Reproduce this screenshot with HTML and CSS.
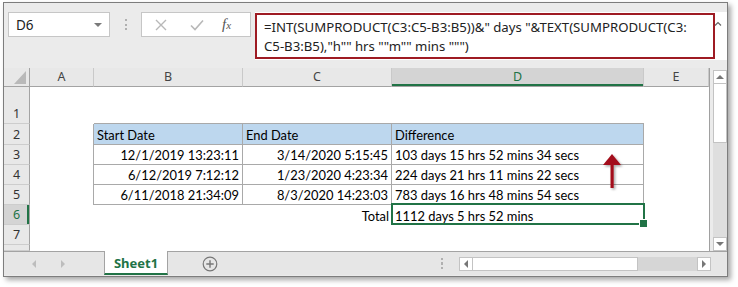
FILE: index.html
```html
<!DOCTYPE html>
<html lang="en">
<head>
<meta charset="UTF-8" />
<title>Sheet1</title>
<link rel="stylesheet" href="styles.css">
</head>
<body>
<div class="window">

  <div class="formula-bar">
    <div class="name-box"><span>D6</span><i class="caret"></i></div>
    <div class="bar-sep"><i></i></div>
    <div class="fx-box">
      <svg class="fx-icon" width="14" height="14" viewBox="0 0 14 14"><path d="M2 2 L12 12 M12 2 L2 12" stroke="#b8b8b8" stroke-width="1.4" fill="none"/></svg>
      <svg class="fx-icon" width="16" height="14" viewBox="0 0 16 14"><path d="M2 7.5 L6 11.5 L14 2.5" stroke="#b8b8b8" stroke-width="1.6" fill="none"/></svg>
      <span class="fx-label">f<small>x</small></span>
    </div>
    <div class="formula-field">
      <div class="formula-text">=INT(SUMPRODUCT(C3:C5-B3:B5))&amp;" days "&amp;TEXT(SUMPRODUCT(C3:<br>C5-B3:B5),"h"" hrs ""m"" mins """)</div>
      <svg class="field-up" width="8" height="5" viewBox="0 0 8 5"><path d="M1 4.5 L4 1.5 L7 4.5" stroke="#666" stroke-width="1.2" fill="none"/></svg>
    </div>
  </div>

  <div class="sheet-area">
    <div class="sheet">
      <table class="grid">
        <colgroup>
          <col style="width:26px"><col style="width:64px"><col style="width:149px">
          <col style="width:149px"><col style="width:252px"><col style="width:65px">
        </colgroup>
        <tr class="head-row">
          <td class="ch corner"><i></i></td><td class="ch">A</td><td class="ch">B</td><td class="ch">C</td><td class="ch cur">D</td><td class="ch">E</td>
        </tr>
        <tr class="row-tall">
          <td class="rh">1</td><td></td><td class="tt"></td><td class="tt"></td><td class="tt"></td><td></td>
        </tr>
        <tr class="row-2">
          <td class="rh">2</td><td class="tl"></td><td class="tc fill">Start Date</td><td class="tc fill">End Date</td><td class="tc fill">Difference</td><td></td>
        </tr>
        <tr class="row">
          <td class="rh">3</td><td class="tl"></td><td class="tc num">12/1/2019 13:23:11</td><td class="tc num">3/14/2020 5:15:45</td><td class="tc">103 days 15 hrs 52 mins 34 secs</td><td></td>
        </tr>
        <tr class="row">
          <td class="rh">4</td><td class="tl"></td><td class="tc num">6/12/2019 7:12:12</td><td class="tc num">1/23/2020 4:23:34</td><td class="tc">224 days 21 hrs 11 mins 22 secs</td><td></td>
        </tr>
        <tr class="row">
          <td class="rh">5</td><td class="tl"></td><td class="tc num">6/11/2018 21:34:09</td><td class="tc num">8/3/2020 14:23:03</td><td class="tc">783 days 16 hrs 48 mins 54 secs</td><td></td>
        </tr>
        <tr class="row">
          <td class="rh cur">6</td><td></td><td></td><td class="num">Total</td><td class="active">1112 days 5 hrs 52 mins</td><td></td>
        </tr>
        <tr class="row">
          <td class="rh">7</td><td></td><td></td><td></td><td></td><td></td>
        </tr>
        <tr class="row-cut">
          <td class="rh"></td><td></td><td></td><td></td><td></td><td></td>
        </tr>
      </table>

      <!-- red pointer drawn over the sheet -->
      <svg class="pointer" width="30" height="42" viewBox="0 0 30 42">
        <defs>
          <filter id="shade" x="-50%" y="-50%" width="200%" height="200%">
            <feDropShadow dx="1.5" dy="1.5" stdDeviation="1.2" flood-color="#000" flood-opacity="0.35"/>
          </filter>
        </defs>
        <g filter="url(#shade)" fill="#a3101b">
          <polygon points="14,4 5,15 23,15"/>
          <rect x="12.5" y="14" width="3.2" height="24"/>
        </g>
      </svg>
    </div>

    <div class="vscroll">
      <div class="sbtn"><i class="tri up"></i></div>
      <div class="vthumb"></div>
      <div class="vtrack"></div>
      <div class="sbtn"><i class="tri down"></i></div>
    </div>
  </div>

  <div class="tab-bar">
    <div class="tab-nav"><i class="tri left pale"></i><i class="tri right pale"></i></div>
    <div class="tab">Sheet1</div>
    <svg class="add-sheet" width="16" height="16" viewBox="0 0 16 16">
      <circle cx="8" cy="8" r="6.8" stroke="#777" stroke-width="1.2" fill="none"/>
      <path d="M8 4.3 V11.7 M4.3 8 H11.7" stroke="#777" stroke-width="1.4"/>
    </svg>
    <div class="tab-space"></div>
    <div class="bar-sep small"><i></i></div>
    <div class="hscroll">
      <div class="sbtn"><i class="tri left"></i></div>
      <div class="hthumb"></div>
      <div class="htrack"></div>
      <div class="sbtn"><i class="tri right"></i></div>
    </div>
  </div>

</div>
</body>
</html>
```

FILE: styles.css
```css
* { box-sizing: border-box; }
body { margin: 0; width: 738px; height: 287px; overflow: hidden; background: #fff; font-family: "Noto Sans", Arial, sans-serif; color: #222; }

.window { margin: 2px 0 0 3px; width: 725px; height: 275px; border: 1px solid #7d7d7d; background: #ebebeb; box-shadow: 3px 3px 5px rgba(0,0,0,0.35); display: flex; flex-direction: column; }

/* formula bar */
.formula-bar { height: 65px; display: flex; align-items: flex-start; padding: 9px 0 0 4px; }
.name-box { width: 102px; height: 25px; background: #fff; border: 1px solid #c6c6c6; display: flex; align-items: center; justify-content: space-between; padding: 0 7px 0 7px; font-size: 13.5px; }
.caret { width: 0; height: 0; border-left: 4px solid transparent; border-right: 4px solid transparent; border-top: 4px solid #7a7a7a; }
.bar-sep { width: 31px; height: 25px; display: flex; justify-content: center; align-items: center; }
.bar-sep i { width: 2px; height: 11px; background: repeating-linear-gradient(#b0b0b0 0 2px, transparent 2px 4.5px); }
.bar-sep.small { width: 34px; height: 24px; }
.fx-box { width: 110px; height: 25px; background: #fff; border: 1px solid #c6c6c6; display: flex; align-items: center; padding-left: 12px; gap: 21px; }
.fx-icon { display: block; }
.fx-label { font-family: "Liberation Serif", serif; font-style: italic; font-size: 15px; color: #555; margin-left: -4px; }
.fx-label small { font-size: 11px; }
.formula-field { flex: 1; margin-left: 4px; height: 48px; background: #fff; position: relative; }
.formula-text { width: 460px; height: 46px; margin-top: 1px; border: 2px solid #9e1b23; padding: 3px 7px; font-size: 13.2px; line-height: 19px; white-space: nowrap; }
.field-up { position: absolute; right: 5px; top: 9px; }

/* sheet */
.sheet-area { height: 183px; display: flex; }
.sheet { position: relative; width: 706px; background: #fff; border-right: 1px solid #a0a0a0; }
.grid { table-layout: fixed; width: 705px; border-collapse: separate; border-spacing: 0; font-family: Lato, "Noto Sans", sans-serif; font-size: 12.9px; color: #000; }
.grid td { padding: 0 3px 1px; white-space: nowrap; overflow: hidden; vertical-align: bottom; line-height: 16px; }
.head-row { height: 19px; }
.row-tall { height: 37px; }
.row-2 { height: 21px; }
.row { height: 20px; }
.row-cut { height: 6px; }
.row-cut td { line-height: 0; padding: 0; }

.ch { background: #e8e8e8; border-right: 1px solid #c9c9c9; border-bottom: 1px solid #a3a3a3; text-align: center; vertical-align: middle !important; font-family: "Noto Sans", sans-serif; font-size: 12.5px; color: #444; padding: 0 !important; }
.ch.cur { background: #d4d4d4; color: #217346; box-shadow: inset 0 -2px #217346; }
.ch.corner { position: relative; border-right-color: #a3a3a3; }
.ch.corner i { position: absolute; right: 3px; bottom: 2px; width: 0; height: 0; border-left: 12px solid transparent; border-bottom: 13px solid #b9b9b9; }
.rh { background: #e8e8e8; border-right: 1px solid #a3a3a3; border-bottom: 1px solid #cdcdcd; text-align: center; font-family: "Noto Sans", sans-serif; font-size: 12.5px; color: #333; padding: 0 0 1px !important; }
.rh.cur { background: #d4d4d4; color: #217346; box-shadow: inset -2px 0 #217346; }

.tt { border-bottom: 1px solid #a9a9a9; }
.tl { border-right: 1px solid #a9a9a9; }
.tc { border-right: 1px solid #a9a9a9; border-bottom: 1px solid #a9a9a9; }
.fill { background: #bdd7ee; }
.num { text-align: right; }
.active { position: relative; overflow: visible !important; }
.active::after { content: ""; position: absolute; left: -1px; right: -1px; top: -2px; bottom: 0; border: 2px solid #217346; }
.active::before { content: ""; position: absolute; right: -4px; bottom: -3px; width: 7px; height: 7px; background: #217346; border: 1px solid #fff; z-index: 1; }

.pointer { position: absolute; left: 594px; top: 82px; }

/* scroll bars */
.vscroll { width: 14px; margin-left: 3px; padding-top: 2px; display: flex; flex-direction: column; }
.sbtn { width: 14px; height: 14px; background: #fff; border: 1px solid #c3c3c3; display: flex; align-items: center; justify-content: center; flex: none; }
.vthumb { height: 59px; background: #fff; border: 1px solid #c3c3c3; border-top: 0; }
.vtrack { flex: 1; background: #dedede; }
.tri { width: 0; height: 0; display: block; }
.tri.up { border-left: 4px solid transparent; border-right: 4px solid transparent; border-bottom: 4px solid #777; }
.tri.down { border-left: 4px solid transparent; border-right: 4px solid transparent; border-top: 4px solid #777; }
.tri.left { border-top: 4px solid transparent; border-bottom: 4px solid transparent; border-right: 4px solid #777; }
.tri.right { border-top: 4px solid transparent; border-bottom: 4px solid transparent; border-left: 4px solid #777; }
.tri.pale { border-left-color: transparent; border-right-color: transparent; }
.tri.left.pale { border-right-color: #bdbdbd; }
.tri.right.pale { border-left-color: #bdbdbd; }

/* sheet tabs */
.tab-bar { height: 24px; border-top: 1px solid #a3a3a3; background: #e6e6e6; display: flex; align-items: center; }
.tab-nav { width: 100px; height: 100%; display: flex; align-items: center; padding-left: 28px; gap: 25px; }
.tab { width: 64px; height: 24px; margin-top: -1px; align-self: flex-start; background: #fff; border-left: 1px solid #a3a3a3; border-right: 1px solid #a3a3a3; border-bottom: 2px solid #217346; display: flex; align-items: center; justify-content: center; font-size: 13px; font-weight: bold; color: #217346; padding-top: 1px; }
.add-sheet { margin-left: 34px; }
.tab-space { flex: 1; }
.hscroll { width: 252px; height: 14px; margin-right: 16px; display: flex; }
.hthumb { width: 165px; background: #fff; border: 1px solid #c3c3c3; border-left: 0; }
.htrack { flex: 1; background: #d6d6d6; }
```
